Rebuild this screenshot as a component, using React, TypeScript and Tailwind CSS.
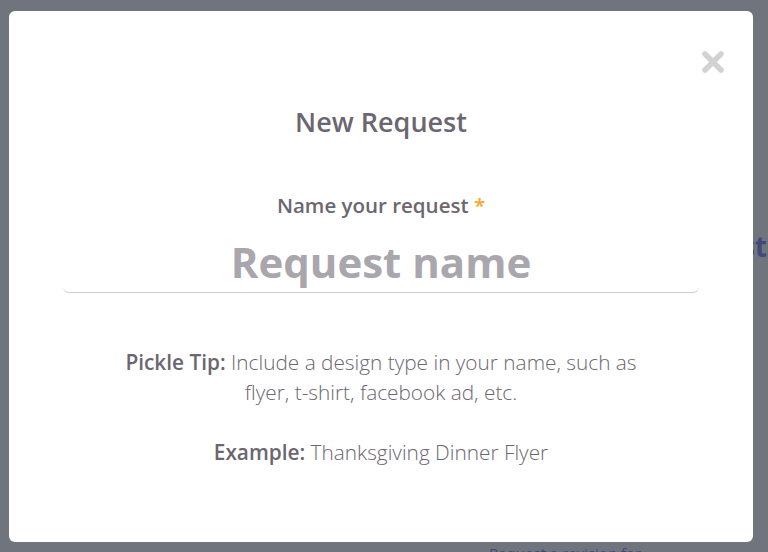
import React from "react";

export default function App() {
  return (
    <div
      className="relative h-[552px] w-[768px] overflow-hidden bg-[#70747d]"
      style={{ fontFamily: '"Open Sans", "Noto Sans", sans-serif' }}
    >
      {/* page content behind the dimmed overlay */}
      <div className="absolute right-[1px] top-[228px] text-[28px] font-bold leading-[36px] text-[#3f4a7a]">Request</div>
      <div className="absolute left-[489px] top-[543px] text-[15px] leading-[20px] text-[#3f4a7a]">Request a revision for</div>

      {/* modal */}
      <div className="absolute left-[9px] top-[11px] flex h-[531px] w-[744px] flex-col items-center rounded-[6px] bg-white text-[#6b6670]">
        <button className="absolute right-[27px] top-[38px] flex h-[26px] w-[26px] items-center justify-center">
          <svg width="26" height="26" viewBox="0 0 26 26">
            <path d="M5 5 L21 21 M21 5 L5 21" stroke="#d2d2d4" strokeWidth="5.5" strokeLinecap="round" />
          </svg>
        </button>

        <h2 className="mt-[93px] text-[27px] font-semibold leading-[36px]">New Request</h2>

        <label className="mt-[51px] text-[20.5px] font-semibold leading-[28px]">
          Name your request <span className="text-[#f5a623]">*</span>
        </label>

        <input
          placeholder="Request name"
          className="mt-[13px] h-[61px] w-[636px] rounded-b-[6px] border-b-[1.5px] border-[#cfcfd2] bg-white pb-[2px] text-center text-[42px] font-bold text-[#6b6670] outline-none placeholder:text-[#aaa6ad]"
        />

        <p className="mt-[54px] w-[560px] text-center text-[20.8px] font-light leading-[30px]">
          <span className="font-semibold">Pickle Tip:</span> Include a design type in your name, such as
          <br />
          flyer, t-shirt, facebook ad, etc.
        </p>

        <p className="mt-[30px] text-center text-[20.8px] font-light leading-[30px]">
          <span className="font-semibold">Example:</span> Thanksgiving Dinner Flyer
        </p>
      </div>
    </div>
  );
}
